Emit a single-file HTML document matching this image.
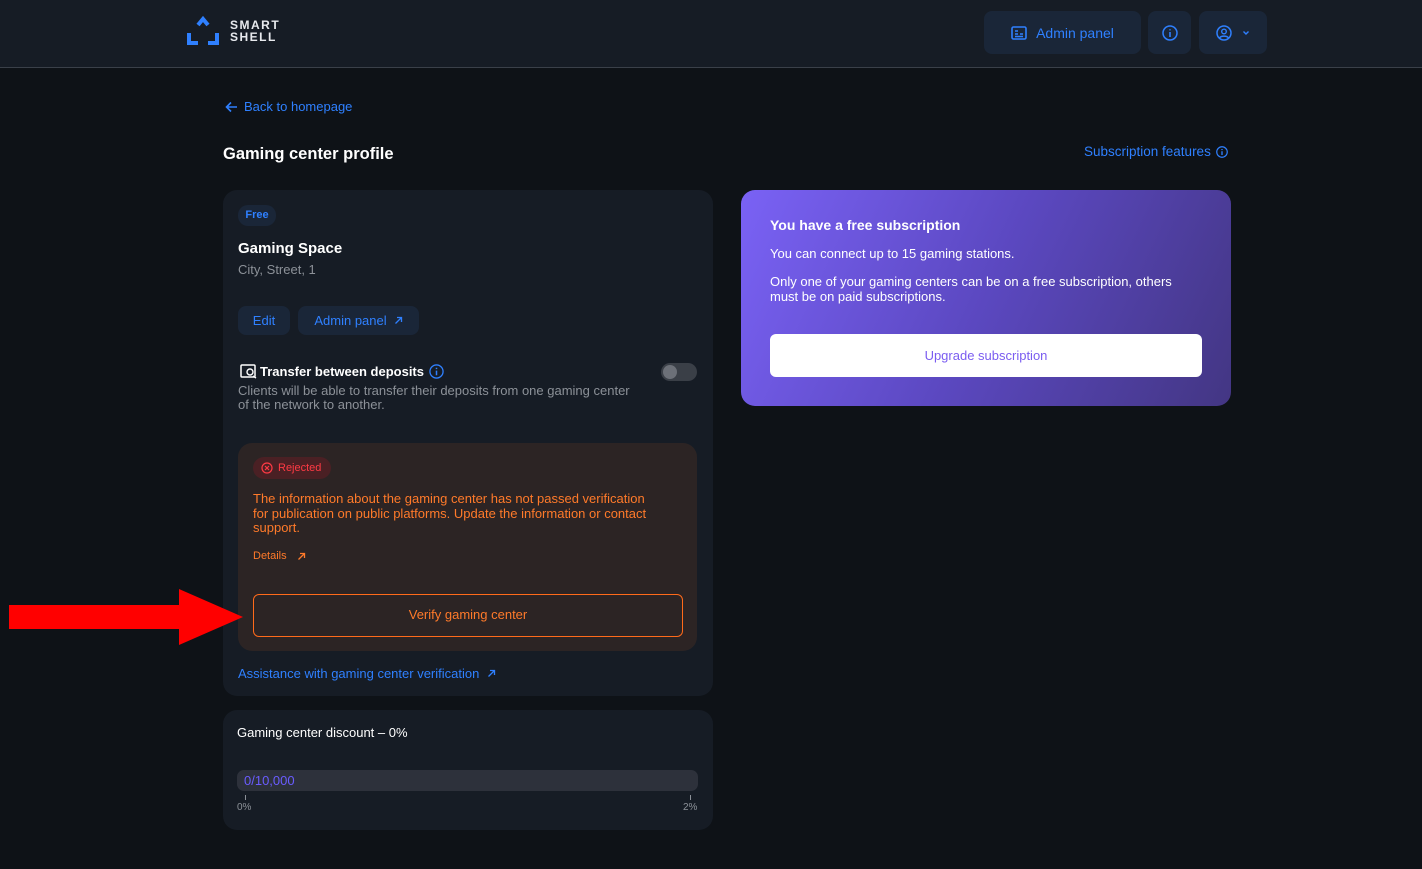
<!DOCTYPE html>
<html><head><meta charset="utf-8"><style>
*{box-sizing:border-box;margin:0;padding:0}
body{width:1422px;height:869px;background:#0e1217;font-family:"Liberation Sans",sans-serif;position:relative;overflow:hidden;color:#fff}
.a{position:absolute}
.blue{color:#2f80ff}
.hdr{left:0;top:0;width:1422px;height:68px;background:#161c25;border-bottom:1px solid #3a4049}
.btn{background:#1a2638;border-radius:8px;display:flex;align-items:center;justify-content:center;color:#2f80ff;font-size:14px}
.card{background:#161c25;border-radius:14px}
svg{display:block}
</style></head><body>
<div class="a hdr"></div>
<svg class="a" style="left:186px;top:14px" width="34" height="32" viewBox="0 0 34 32">
<polyline points="12,11 17,5 22,11" fill="none" stroke="#2f80ff" stroke-width="4"/>
<polyline points="3,19 3,29 12,29" fill="none" stroke="#2f80ff" stroke-width="4"/>
<polyline points="31,19 31,29 22,29" fill="none" stroke="#2f80ff" stroke-width="4"/>
</svg>
<div class="a" style="left:230px;top:19px;font-size:12px;line-height:12px;letter-spacing:1.5px;color:#e8eaee;font-weight:bold">SMART<br>SHELL</div>
<div class="a btn" style="left:984px;top:11px;width:157px;height:43px"><svg width="16" height="14" viewBox="0 0 16 14" style="margin-right:9px"><rect x="1" y="1" width="14" height="12" rx="1.5" fill="none" stroke="#2f80ff" stroke-width="1.6"/><path d="M4 5h3M4 8h3M9 8h3M4 10.5h8" stroke="#2f80ff" stroke-width="1.4"/></svg>Admin panel</div>
<div class="a btn" style="left:1148px;top:11px;width:43px;height:43px"><svg width="16" height="16" viewBox="0 0 16 16"><circle cx="8" cy="8" r="7" fill="none" stroke="#2f80ff" stroke-width="1.5"/><path d="M8 7v5M8 4.2v1.2" stroke="#2f80ff" stroke-width="1.6"/></svg></div>
<div class="a btn" style="left:1199px;top:11px;width:68px;height:43px"><svg width="16" height="16" viewBox="0 0 16 16"><circle cx="8" cy="8" r="7" fill="none" stroke="#2f80ff" stroke-width="1.5"/><circle cx="8" cy="6.5" r="2.3" fill="none" stroke="#2f80ff" stroke-width="1.4"/><path d="M3.5 13c1.5-2.5 7.5-2.5 9 0" fill="none" stroke="#2f80ff" stroke-width="1.4"/></svg><svg width="8" height="6" viewBox="0 0 8 6" style="margin-left:10px"><path d="M1.5 1.5L4 4l2.5-2.5" fill="none" stroke="#2f80ff" stroke-width="1.4"/></svg></div>

<div class="a blue" style="left:225px;top:99px;font-size:13px;display:flex;align-items:center"><svg width="13" height="12" viewBox="0 0 13 12" style="margin-right:6px"><path d="M12 6H2M6 1.5L1.5 6 6 10.5" fill="none" stroke="#2f80ff" stroke-width="1.6"/></svg>Back to homepage</div>
<div class="a" style="left:223px;top:145px;font-size:16.5px;font-weight:bold">Gaming center profile</div>
<div class="a blue" style="left:1084px;top:144px;font-size:13.5px;display:flex;align-items:center">Subscription features<svg width="12" height="12" viewBox="0 0 16 16" style="margin-left:5px"><circle cx="8" cy="8" r="7" fill="none" stroke="#2f80ff" stroke-width="1.6"/><path d="M8 7v5M8 4v1.5" stroke="#2f80ff" stroke-width="1.8"/></svg></div>

<div class="a card" style="left:223px;top:190px;width:490px;height:506px"></div>
<div class="a" style="left:238px;top:205px;width:38px;height:21px;border-radius:10px;background:#1a2638;color:#2f80ff;font-size:11px;font-weight:bold;text-align:center;line-height:21px">Free</div>
<div class="a" style="left:238px;top:240px;font-size:15px;font-weight:bold">Gaming Space</div>
<div class="a" style="left:238px;top:262px;font-size:13px;color:#8c9198">City, Street, 1</div>
<div class="a btn" style="left:238px;top:306px;width:52px;height:29px;font-size:13px">Edit</div>
<div class="a btn" style="left:298px;top:306px;width:121px;height:29px;font-size:13px">Admin panel<svg width="9" height="9" viewBox="0 0 9 9" style="margin-left:7px"><path d="M1.5 7.5L7.5 1.5M3 1.5h4.5V6" fill="none" stroke="#2f80ff" stroke-width="1.3"/></svg></div>
<svg class="a" style="left:240px;top:364px" width="17" height="15" viewBox="0 0 17 15"><rect x="1" y="1" width="14" height="12" rx="1" fill="none" stroke="#fff" stroke-width="1.5"/><circle cx="10" cy="8" r="3" fill="none" stroke="#fff" stroke-width="1.4"/><path d="M13 12l3 2" stroke="#fff" stroke-width="1.4"/></svg>
<div class="a" style="left:260px;top:364px;font-size:13px;font-weight:bold;display:flex;align-items:center">Transfer between deposits<svg width="15" height="15" viewBox="0 0 16 16" style="margin-left:5px"><circle cx="8" cy="8" r="7" fill="none" stroke="#2f80ff" stroke-width="1.4"/><path d="M8 7v5M8 4v1.5" stroke="#2f80ff" stroke-width="1.6"/></svg></div>
<div class="a" style="left:661px;top:363px;width:36px;height:18px;border-radius:9px;background:#3a3f47"><div style="position:absolute;left:2px;top:2px;width:14px;height:14px;border-radius:7px;background:#6c7078"></div></div>
<div class="a" style="left:238px;top:384px;width:400px;font-size:13px;line-height:14px;color:#8c9198">Clients will be able to transfer their deposits from one gaming center of the network to another.</div>

<div class="a" style="left:238px;top:443px;width:459px;height:208px;border-radius:14px;background:#2c2424"></div>
<div class="a" style="left:253px;top:457px;width:78px;height:22px;border-radius:11px;background:#4a2024;color:#ff3a44;font-size:11px;display:flex;align-items:center;padding-left:8px"><svg width="12" height="12" viewBox="0 0 12 12" style="margin-right:5px"><circle cx="6" cy="6" r="5" fill="none" stroke="#ff3a44" stroke-width="1.2"/><path d="M4 4l4 4M8 4l-4 4" stroke="#ff3a44" stroke-width="1.2"/></svg>Rejected</div>
<div class="a" style="left:253px;top:492px;width:410px;font-size:13px;line-height:14.5px;color:#ff7a2a">The information about the gaming center has not passed verification for publication on public platforms. Update the information or contact support.</div>
<div class="a" style="left:253px;top:550px;font-size:11px;color:#ff7a2a;display:flex;align-items:center">Details<svg width="9" height="9" viewBox="0 0 9 9" style="margin-left:10px"><path d="M1.5 7.5L7.5 1.5M3 1.5h4.5V6" fill="none" stroke="#ff7a2a" stroke-width="1.3"/></svg></div>
<div class="a" style="left:253px;top:594px;width:430px;height:43px;border:1.5px solid #ff6a1a;border-radius:6px;color:#ff7a2a;font-size:13px;text-align:center;line-height:40px">Verify gaming center</div>
<div class="a blue" style="left:238px;top:666px;font-size:13px;display:flex;align-items:center">Assistance with gaming center verification<svg width="9" height="9" viewBox="0 0 9 9" style="margin-left:8px"><path d="M1.5 7.5L7.5 1.5M3 1.5h4.5V6" fill="none" stroke="#2f80ff" stroke-width="1.3"/></svg></div>

<div class="a card" style="left:223px;top:710px;width:490px;height:120px"></div>
<div class="a" style="left:237px;top:725px;font-size:13px">Gaming center discount – 0%</div>
<div class="a" style="left:237px;top:770px;width:461px;height:21px;border-radius:7px;background:#2d313b;color:#6a5cff;font-size:13px;line-height:21px;padding-left:7px">0/10,000</div>
<div class="a" style="left:245px;top:795px;width:1px;height:5px;background:#8c9198"></div>
<div class="a" style="left:690px;top:795px;width:1px;height:5px;background:#8c9198"></div>
<div class="a" style="left:237px;top:802px;font-size:10px;color:#8c9198">0%</div>
<div class="a" style="left:683px;top:802px;font-size:10px;color:#8c9198">2%</div>

<div class="a" style="left:741px;top:190px;width:490px;height:216px;border-radius:14px;background:linear-gradient(115deg,#7a62f5 0%,#5b48c0 50%,#433683 100%)"></div>
<div class="a" style="left:770px;top:217px;font-size:14px;font-weight:bold">You have a free subscription</div>
<div class="a" style="left:770px;top:246px;font-size:13px">You can connect up to 15 gaming stations.</div>
<div class="a" style="left:770px;top:275px;width:418px;font-size:13px;line-height:14.5px">Only one of your gaming centers can be on a free subscription, others must be on paid subscriptions.</div>
<div class="a" style="left:770px;top:334px;width:432px;height:43px;border-radius:6px;background:#fff;color:#7a5cf0;font-size:13px;text-align:center;line-height:43px">Upgrade subscription</div>

<svg class="a" style="left:0;top:585px" width="250" height="64" viewBox="0 0 250 64"><path d="M9 20H179V4L243 32L179 60V44H9Z" fill="#ff0000"/></svg>
</body></html>
